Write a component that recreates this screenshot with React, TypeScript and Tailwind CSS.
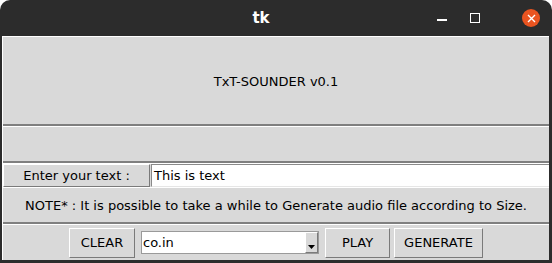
import React from "react";

const raised =
  "border-t border-l border-t-white border-l-white border-b border-r border-b-[#7a7a7a] border-r-[#7a7a7a]";

const App: React.FC = () => {
  return (
    <div className="w-[552px] h-[263px] bg-[#2c2c2c] rounded-t-[10px] flex flex-col overflow-hidden font-['DejaVu_Sans',sans-serif] text-black">
      {/* title bar */}
      <div className="h-[36px] shrink-0 flex items-center relative">
        <span className="w-full text-center text-white font-bold text-[15px] pr-[30px]">
          tk
        </span>
        <div className="absolute right-[12px] top-0 h-full flex items-center">
          <div className="w-[10px] h-[2px] bg-white mt-[4px]" />
          <div className="w-[10px] h-[10px] border-[1.5px] border-white ml-[23px]" />
          <div className="w-[18px] h-[18px] rounded-full bg-[#e95420] ml-[42px] flex items-center justify-center">
            <svg width="9" height="9" viewBox="0 0 9 9">
              <path d="M1 1 L8 8 M8 1 L1 8" stroke="white" strokeWidth="1.4" />
            </svg>
          </div>
        </div>
      </div>

      {/* body */}
      <div className="flex-1 ml-[2px] mr-[3px] mb-[3px] bg-[#d9d9d9] border-t border-l border-white flex flex-col text-[13px]">
        <div className="h-[89px] flex items-center justify-center border-b-2 border-[#7f7f7f] pt-[2px]">
          TxT-SOUNDER v0.1
        </div>
        <div className="h-[37px] border-t border-white border-b-2 border-b-[#7f7f7f]" />
        <div className="h-[24px] flex border-t border-white">
          <div className={`w-[147px] flex items-center justify-center ${raised}`}>
            Enter your text :
          </div>
          <div className="flex-1 ml-[1px] bg-white border-t border-l border-[#8a8a8a] border-b border-b-[#e6e6e6] flex items-center pl-[2px]">
            This is text
          </div>
        </div>
        <div className="h-[37px] flex items-center justify-center border-t border-white border-b-2 border-b-[#7f7f7f] pt-[1px]">
          NOTE* : It is possible to take a while to Generate audio file according to Size.
        </div>
        <div className="flex-1 flex items-center pl-[66px] border-t border-white">
          <div className={`w-[66px] h-[30px] flex items-center justify-center ${raised}`}>
            CLEAR
          </div>
          <div className="w-[178px] h-[23px] ml-[6px] bg-white border border-[#9a9a9a] flex items-stretch">
            <div className="flex-1 flex items-center pl-[1px]">co.in</div>
            <div className={`w-[13px] bg-[#d9d9d9] flex items-end justify-center pb-[3px] ${raised}`}>
              <svg width="7" height="4" viewBox="0 0 7 4">
                <path d="M0 0 L7 0 L3.5 4 Z" fill="black" />
              </svg>
            </div>
          </div>
          <div className={`w-[65px] h-[30px] ml-[6px] flex items-center justify-center ${raised}`}>
            PLAY
          </div>
          <div className={`w-[89px] h-[30px] ml-[4px] flex items-center justify-center ${raised}`}>
            GENERATE
          </div>
        </div>
      </div>
    </div>
  );
};

export default App;
